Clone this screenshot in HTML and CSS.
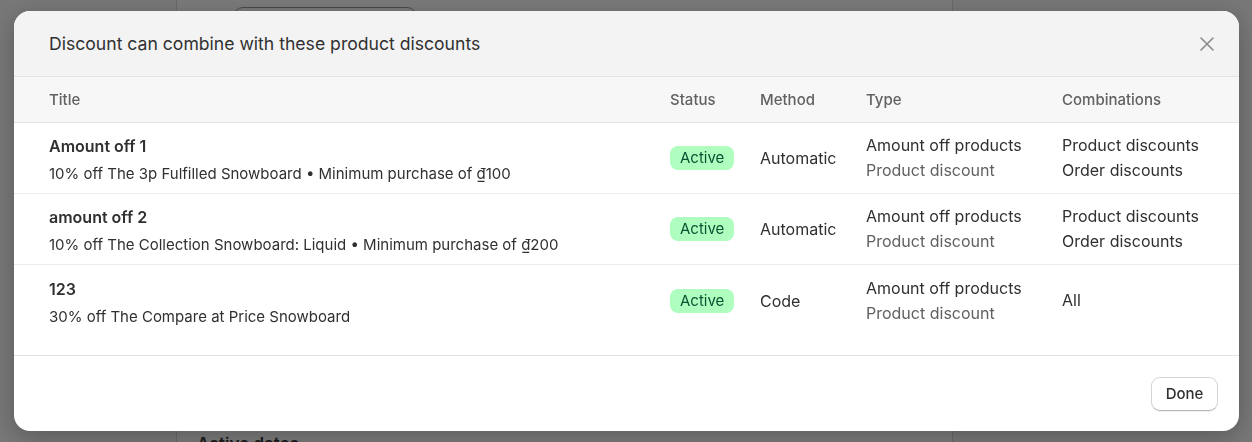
FILE: index.html
```html
<!DOCTYPE html>
<html lang="en">
<head>
<meta charset="utf-8">
<title>Discount combinations</title>
<link rel="stylesheet" href="styles.css">
</head>
<body>
<div class="page">
  <div class="page-col">
    <div class="page-pill"></div>
    <div class="page-spacer"></div>
    <div class="page-heading">Active dates</div>
  </div>
</div>
<div class="modal">
  <div class="modal-header">
    <h2 class="modal-title">Discount can combine with these product discounts</h2>
    <button class="close" aria-label="Close">
      <svg width="16" height="16" viewBox="0 0 16 16"><path d="M2 2L14 14M14 2L2 14" stroke="#8a8a8a" stroke-width="1.6" stroke-linecap="round"/></svg>
    </button>
  </div>
  <div class="table">
    <div class="row head">
      <div class="c-title">Title</div>
      <div class="c-status">Status</div>
      <div class="c-method">Method</div>
      <div class="c-type">Type</div>
      <div class="c-comb">Combinations</div>
    </div>
    <div class="row">
      <div class="c-title"><div class="name">Amount off 1</div><div class="desc">10% off The 3p Fulfilled Snowboard • Minimum purchase of ₫100</div></div>
      <div class="c-status"><span class="badge">Active</span></div>
      <div class="c-method">Automatic</div>
      <div class="c-type"><div>Amount off products</div><div class="muted">Product discount</div></div>
      <div class="c-comb"><div>Product discounts</div><div>Order discounts</div></div>
    </div>
    <div class="row">
      <div class="c-title"><div class="name">amount off 2</div><div class="desc">10% off The Collection Snowboard: Liquid • Minimum purchase of ₫200</div></div>
      <div class="c-status"><span class="badge">Active</span></div>
      <div class="c-method">Automatic</div>
      <div class="c-type"><div>Amount off products</div><div class="muted">Product discount</div></div>
      <div class="c-comb"><div>Product discounts</div><div>Order discounts</div></div>
    </div>
    <div class="row last">
      <div class="c-title"><div class="name">123</div><div class="desc">30% off The Compare at Price Snowboard</div></div>
      <div class="c-status"><span class="badge">Active</span></div>
      <div class="c-method">Code</div>
      <div class="c-type"><div>Amount off products</div><div class="muted">Product discount</div></div>
      <div class="c-comb"><div>All</div></div>
    </div>
  </div>
  <div class="modal-footer">
    <button class="btn">Done</button>
  </div>
</div>
</body>
</html>
```
FILE: styles.css
```css
* { box-sizing: border-box; }
html, body { margin: 0; height: 100%; }
body {
  font-family: Inter, "Noto Sans", sans-serif;
  background: #787878;
  color: #303030;
  overflow: hidden;
}
.page {
  height: 442px;
  display: flex;
  justify-content: flex-start;
  padding-left: 176px;
}
.page-col {
  width: 777px;
  height: 100%;
  border-left: 1px solid #6a6a6a;
  border-right: 1px solid #6a6a6a;
  background: #7b7b7b;
  display: flex;
  flex-direction: column;
}
.page-pill {
  margin: 7px 0 0 56px;
  width: 184px;
  height: 30px;
  border: 1px solid #4a4a4a;
  border-radius: 10px;
}
.page-spacer { flex: 1; }
.page-heading {
  padding-left: 20px;
  font-size: 17px;
  font-weight: 600;
  color: #1c1c1c;
  height: 12px;
  line-height: 28px;
  overflow: visible;
}
.modal {
  position: fixed;
  left: 14px;
  top: 11px;
  width: 1225px;
  height: 420px;
  background: #fff;
  border-radius: 16px;
  overflow: hidden;
  box-shadow: 0 6px 24px rgba(0,0,0,0.25);
  display: flex;
  flex-direction: column;
}
.modal-header {
  height: 66px;
  background: #f3f3f3;
  border-bottom: 1px solid #e3e3e3;
  display: flex;
  align-items: center;
  justify-content: space-between;
  padding: 0 24px 0 35px;
}
.modal-title {
  margin: 0;
  font-size: 17.6px;
  font-weight: 400;
  color: #303030;
  letter-spacing: 0;
}
.close {
  border: 0;
  background: none;
  padding: 0;
  width: 16px;
  height: 16px;
  display: flex;
}
.table {
  border-bottom: 1px solid #e3e3e3;
  padding-bottom: 19px;
}
.row {
  display: grid;
  grid-template-columns: 621px 90px 106px 196px 1fr;
  align-items: center;
  padding: 0 0 0 35px;
  height: 71px;
  border-bottom: 1px solid #ebebeb;
  font-size: 16px;
  color: #303030;
}
.row.last { border-bottom: 0; }
.row.head {
  height: 46px;
  background: #f7f7f7;
  border-bottom: 1px solid #e3e3e3;
  font-size: 15px;
  font-weight: 500;
  color: #616161;
}
.c-title { padding-top: 4px; }
.row.head .c-title { padding-top: 0; }
.name {
  font-weight: 600;
  font-size: 16px;
  line-height: 24px;
}
.desc {
  font-size: 15px;
  line-height: 24px;
  margin-top: 4px;
}
.c-type, .c-comb { line-height: 25px; }
.muted { color: #616161; }
.badge {
  display: inline-block;
  background: #affebf;
  color: #0c5132;
  font-size: 15px;
  line-height: 24px;
  padding: 0 10px;
  border-radius: 8px;
}
.modal-footer {
  flex: 1;
  display: flex;
  justify-content: flex-end;
  align-items: center;
  padding-right: 21px;
}
.btn {
  font-family: inherit;
  font-size: 15px;
  font-weight: 500;
  color: #303030;
  background: #fff;
  border: 1px solid #d4d4d4;
  border-bottom-color: #b5b5b5;
  border-radius: 9px;
  width: 67px;
  height: 34px;
  box-shadow: 0 1px 0 rgba(0,0,0,0.06);
}
```
